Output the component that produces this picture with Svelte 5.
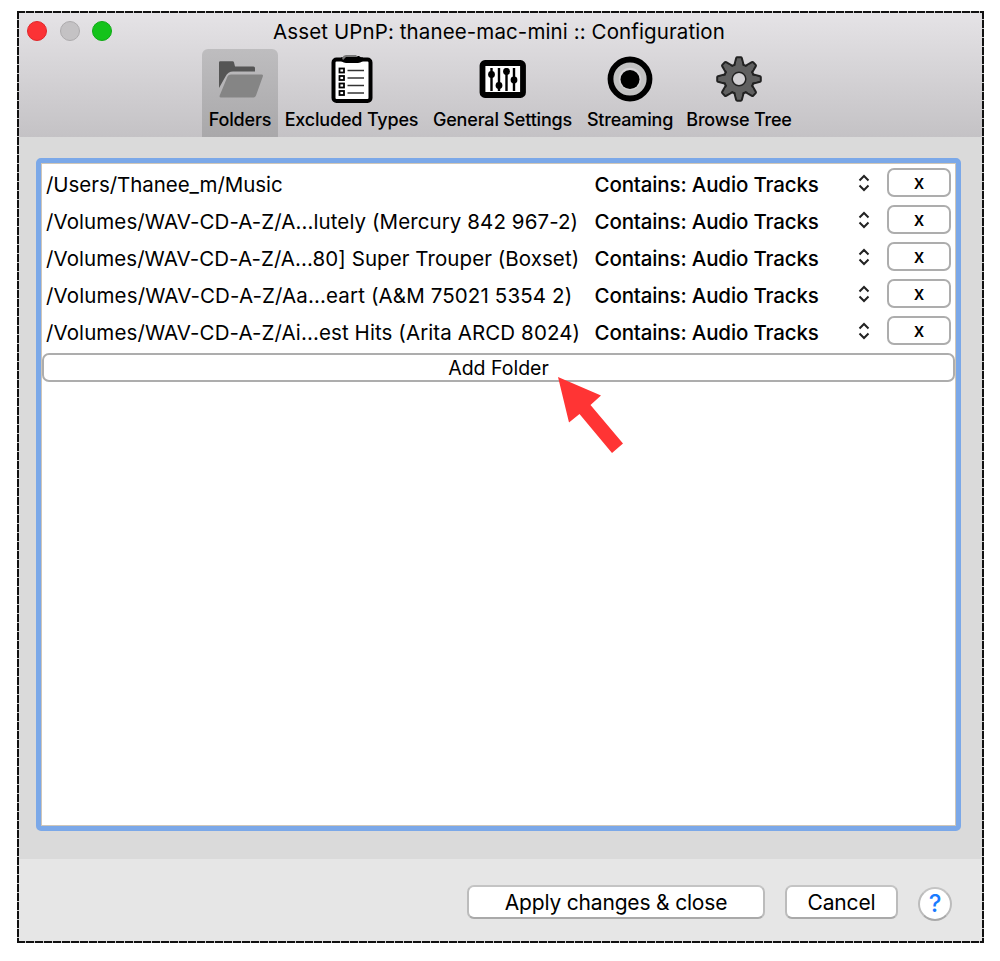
<script lang="ts">
  type Folder = { path: string; tracking: number };

  const folders: Folder[] = [
    { path: '/Users/Thanee_m/Music', tracking: -0.05 },
    { path: '/Volumes/WAV-CD-A-Z/A...lutely (Mercury 842 967-2)', tracking: 0.09 },
    { path: '/Volumes/WAV-CD-A-Z/A...80] Super Trouper (Boxset)', tracking: 0.07 },
    { path: '/Volumes/WAV-CD-A-Z/Aa...eart (A&M 75021 5354 2)', tracking: 0.13 },
    { path: '/Volumes/WAV-CD-A-Z/Ai...est Hits (Arita ARCD 8024)', tracking: 0.1 },
  ];

  const tabs = [
    { id: 'folders', label: 'Folders', width: 76 },
    { id: 'types', label: 'Excluded Types', width: 147 },
    { id: 'general', label: 'General Settings', width: 155 },
    { id: 'streaming', label: 'Streaming', width: 100 },
    { id: 'browse', label: 'Browse Tree', width: 118 },
  ];

  let active = $state('folders');

  const teeth = [0, 45, 90, 135, 180, 225, 270, 315];
</script>

<div class="window">
  <header>
    <div class="titlebar">
      <div class="lights">
        <span class="light red"></span>
        <span class="light grey"></span>
        <span class="light green"></span>
      </div>
      <span class="title">Asset UPnP: thanee-mac-mini :: Configuration</span>
    </div>
    <nav>
      {#each tabs as tab}
        <button class="tab" class:active={active === tab.id} style="width: {tab.width}px" onclick={() => (active = tab.id)}>
          <svg width="48" height="52" viewBox="0 0 48 52">
            {#if tab.id === 'folders'}
              <path d="M3 35V9.500q0-1.300 1.300-1.300H16.500q1.200 0 1.500 1.300l1 4H37.500q1.500 0 1.500 1.500V18.500H17q-5 0-7.500 5z" fill="#555" />
              <path d="M15 21.500H45.500q2 0 1.300 2L40 42.500q-.7 2-2.500 2H5q-2 0-1.300-2L11.500 23.500q.9-2 3.500-2z" fill="#858585" />
            {:else if tab.id === 'types'}
              <rect x="5.500" y="6.500" width="37" height="41.500" rx="3" fill="#fff" stroke="#000" stroke-width="4" />
              <path d="M13 4.500q2.500 0 4-1.500h14q1.500 1.500 4 1.500V8q-3 2-5 2H18q-2 0-5-2z" fill="#000" />
              <path d="M14 5q1.500-3 4-3h10l2 2H18l-3 3z" fill="#777" />
              {#each [17.5, 25, 32.5, 40] as y}
                <rect x="11.500" y={y - 2} width="4.500" height="4" fill="none" stroke="#000" stroke-width="1.800" />
                <path d="M19.500 {y}H36" stroke="#333" stroke-width="1.500" />
              {/each}
            {:else if tab.id === 'general'}
              <rect x="3.500" y="10" width="40.500" height="32" rx="2.500" fill="#fff" stroke="#000" stroke-width="5.800" />
              <path d="M12.500 15v23M20 15v23M27.500 15v23M35 15v23" stroke="#000" stroke-width="2.400" />
              <circle cx="12.500" cy="21.500" r="3.400" />
              <circle cx="20" cy="32.500" r="3.400" />
              <circle cx="27.500" cy="18.500" r="3.400" />
              <circle cx="35" cy="27" r="3.400" />
            {:else if tab.id === 'streaming'}
              <circle cx="24" cy="26" r="14" fill="none" stroke="#c2c2c2" stroke-width="5.500" />
              <circle cx="24" cy="26" r="19.500" fill="none" stroke="#000" stroke-width="5.800" />
              <circle cx="24" cy="26.500" r="9.500" />
            {:else}
              <g stroke="#222" stroke-width="2" stroke-linejoin="round">
                {#each teeth as angle}
                  <path d="M19 13.500l2.200-8.500q.3-.8 1-.8h3.600q.7 0 1 .8l2.200 8.500z" fill="#606060" transform="rotate({angle} 24 26)" />
                {/each}
                <circle cx="24" cy="26" r="14.800" fill="#606060" />
              </g>
              {#each teeth as angle}
                <path d="M19.900 15l1.500-6.500h5.200l1.500 6.500z" fill="#606060" transform="rotate({angle} 24 26)" />
              {/each}
              <circle cx="24" cy="26" r="6.800" fill="#d3d1d4" stroke="#222" stroke-width="1.500" />
            {/if}
          </svg>
          <span>{tab.label}</span>
        </button>
      {/each}
    </nav>
  </header>

  <main>
    <div class="list">
      {#each folders as folder}
        <div class="row">
          <span class="path" style="letter-spacing: {folder.tracking}px">{folder.path}</span>
          <span class="contains">Contains: Audio Tracks</span>
          <svg class="stepper" width="12" height="18" viewBox="0 0 12 18">
            <path d="M1.500 6.500L6 2l4.500 4.500M1.500 11.500L6 16l4.500-4.500" fill="none" stroke="#222" stroke-width="2" />
          </svg>
          <button class="remove">x</button>
        </div>
      {/each}
      <button class="add">Add Folder</button>
    </div>
  </main>

  <footer>
    <button class="apply">Apply changes &amp; close</button>
    <button class="cancel">Cancel</button>
    <button class="help">?</button>
  </footer>

  <svg class="pointer" width="68" height="78" viewBox="0 0 68 78">
    <path d="M1 0L44 18.500 33.500 28 66 66.500 55 76 22.500 37 12 45.500z" fill="#ff3434" />
  </svg>
</div>

<style>
  :global(body) { background: #fff; }
  .window {
    position: relative;
    width: 967px; height: 932px; margin: 11px 0 0 17px;
    box-sizing: border-box; padding: 2px;
    display: flex; flex-direction: column;
    font-family: Inter, "Liberation Sans", sans-serif;
    font-size: 20.5px; color: #000;
    background: #e6e6e6;
  }
  /* black frame broken by one-pixel ticks */
  .window::after {
    content: ''; position: absolute; inset: 0; pointer-events: none;
    background:
      repeating-linear-gradient(90deg, #111 0 8px, #ccc 8px 9px) 0 0 / 100% 2px no-repeat,
      repeating-linear-gradient(90deg, #111 0 8px, #ccc 8px 9px) 0 100% / 100% 2px no-repeat,
      repeating-linear-gradient(#111 0 8px, #ccc 8px 9px) 0 0 / 2px 100% no-repeat,
      repeating-linear-gradient(#111 0 8px, #ccc 8px 9px) 100% 0 / 2px 100% no-repeat;
  }
  button {
    font: inherit; color: inherit; letter-spacing: inherit;
    padding: 0; margin: 0; box-sizing: border-box;
    background: #fff; border: 2px solid #adadad; border-radius: 7px;
    white-space: nowrap;
  }
  header {
    height: 124px; flex: none;
    display: flex; flex-direction: column;
    background: linear-gradient(#e5e3e6, #c4c2c5);
  }
  .titlebar { position: relative; height: 36px; display: flex; justify-content: center; }
  .title { line-height: 37px; white-space: nowrap; margin-right: 3px; letter-spacing: 0.11px; }
  .lights { position: absolute; left: 8px; top: 8px; display: flex; gap: 12.5px; }
  .light { width: 20px; height: 20px; border-radius: 50%; box-sizing: border-box; border: 1.5px solid; }
  .red { background: #fb3235; border-color: #e0262a; }
  .grey { background: #c4c2c4; border-color: #adabad; }
  .green { background: #14c31b; border-color: #0faa15; }
  nav { display: flex; flex: 1; padding-left: 183px; }
  .tab {
    flex: none; background: none; border: 0; border-radius: 6px 6px 0 0;
    display: flex; flex-direction: column; align-items: center;
    padding-top: 4px; font-size: 18px; font-weight: 500; letter-spacing: -0.18px;
  }
  .tab svg { display: block; }
  .tab span { line-height: 30px; }
  .tab.active { background: linear-gradient(#bebdbf, #a9a8aa); }
  main { height: 722px; flex: none; box-sizing: border-box; padding: 21px 21px 28px 17px; background: #dadada; }
  .list {
    height: 673px; box-sizing: border-box;
    border: 5px solid #7ba8e8; border-radius: 5px;
    background: #fff; box-shadow: inset 0 0 0 1px #cfc6b8;
    padding: 5px 1px 0;
  }
  .row { display: flex; height: 37.1px; padding-left: 4px; }
  .path { width: 548.5px; line-height: 34px; white-space: nowrap; }
  .contains { width: 263px; line-height: 34px; white-space: nowrap; font-weight: 500; letter-spacing: -0.14px; }
  .stepper { margin-top: 6px; margin-right: 17.5px; flex: none; }
  .remove { width: 64px; height: 29px; line-height: 24px; font-size: 19px; font-weight: 500; }
  .add { display: block; width: 913px; height: 29px; line-height: 24px; font-size: 19.5px; }
  footer { flex: 1; display: flex; padding: 26px 30px 0 0; justify-content: flex-end; }
  footer button { height: 34px; font-size: 21px; letter-spacing: -0.18px; border-color: #c4c4c4 #bcbcbc #a9a9a9; }
  .apply { width: 298px; margin-right: 20px; }
  .cancel { width: 113px; margin-right: 20px; }
  footer .help { width: 34px; height: 34px; margin-top: 2px; border-radius: 50%; color: #1a7bff; font-size: 24px; font-weight: 500; line-height: 30px; }
  .pointer { position: absolute; left: 540px; top: 366px; }
</style>
